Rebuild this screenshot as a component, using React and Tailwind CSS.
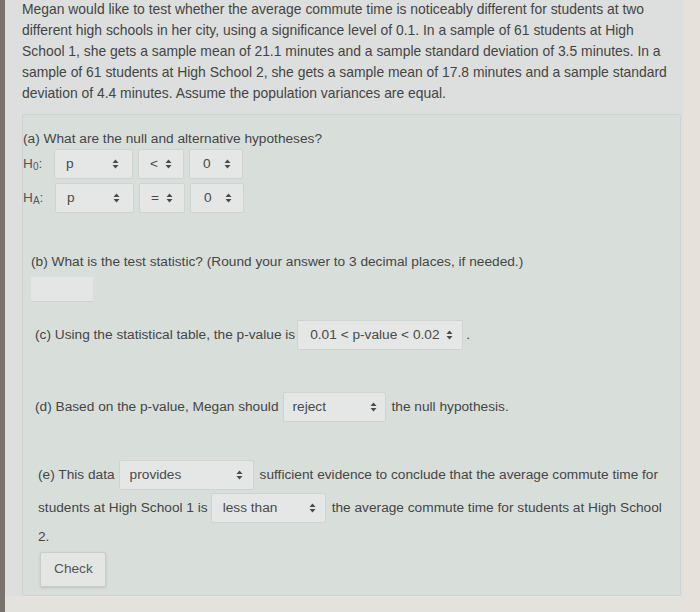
import React from "react";

const Arrows = () => (
  <svg width="7" height="10" viewBox="0 0 7 10" className="shrink-0">
    <path d="M3.5 0.5 L6.5 4 L0.5 4 Z" fill="#4a4a4a" />
    <path d="M3.5 9.5 L6.5 6 L0.5 6 Z" fill="#4a4a4a" />
  </svg>
);

const Select = ({ value, width, pl = "pl-[10px]", pr = "pr-[10px]", h = "h-[30px]" }) => (
  <div
    className={`flex items-center justify-between ${h} ${pl} ${pr} bg-[#e4e7e5] border border-[#cfd4d1] rounded-[2px] shrink-0`}
    style={{ width }}
  >
    <span className="text-[#4a4a4a]">{value}</span>
    <Arrows />
  </div>
);

export default function App() {
  return (
    <div
      className="w-[700px] h-[612px] flex overflow-hidden text-[13.7px] text-[#454545]"
      style={{ fontFamily: '"Liberation Sans", Arial, sans-serif' }}
    >
      <div className="w-[5px] bg-[#7a726d]" />
      <div className="flex-1 flex flex-col bg-[#dcdfdd]">
        <p className="pl-[17px] pr-[4px] text-[13.9px] leading-[21px] -mt-[1px] text-[#444] whitespace-nowrap">
          Megan would like to test whether the average commute time is noticeably different for students at two
          <br />
          different high schools in her city, using a significance level of 0.1. In a sample of 61 students at High
          <br />
          School 1, she gets a sample mean of 21.1 minutes and a sample standard deviation of 3.5 minutes. In a
          <br />
          sample of 61 students at High School 2, she gets a sample mean of 17.8 minutes and a sample standard
          <br />
          deviation of 4.4 minutes. Assume the population variances are equal.
        </p>

        <div className="mt-[10px] ml-[17px] mr-[2px] bg-[#d8dfdb] border border-[#cdd3d0] rounded-[2px] flex flex-col pb-[8px]">
          <div className="mt-[15px] h-[18px] leading-[18px]">(a) What are the null and alternative hypotheses?</div>

          <div className="mt-[1px] flex items-center gap-[5px]">
            <span className="w-[26px] text-[#555]">
              H<sub className="text-[10px]">0</sub>:
            </span>
            <Select value="p" width={79} pl="pl-[11px]" pr="pr-[13px]" />
            <Select value="<" width={46} pl="pl-[11px]" pr="pr-[11px]" />
            <Select value="0" width={54} pl="pl-[13px]" pr="pr-[11px]" />
          </div>
          <div className="mt-[4px] flex items-center gap-[5px]">
            <span className="w-[27px] text-[#555]">
              H<sub className="text-[10px]">A</sub>:
            </span>
            <Select value="p" width={79} pl="pl-[11px]" pr="pr-[13px]" />
            <Select value="=" width={46} pl="pl-[11px]" pr="pr-[11px]" />
            <Select value="0" width={54} pl="pl-[13px]" pr="pr-[11px]" />
          </div>

          <div className="mt-[40px] ml-[8px] h-[18px] leading-[18px]">
            (b) What is the test statistic? (Round your answer to 3 decimal places, if needed.)
          </div>
          <div className="mt-[6px] ml-[8px] w-[62px] h-[25px] bg-[#e3e6e4] border-b border-[#cfd3d0]" />

          <div className="mt-[18px] ml-[12px] flex items-center">
            <span>(c) Using the statistical table, the p-value is</span>
            <div className="ml-[2px]">
              <Select value="0.01 < p-value < 0.02" width={166} pl="pl-[12px]" pr="pr-[9px]" />
            </div>
            <span className="ml-[3px]">.</span>
          </div>

          <div className="mt-[42px] ml-[12px] flex items-center">
            <span>(d) Based on the p-value, Megan should</span>
            <div className="ml-[4px]">
              <Select value="reject" width={103} pl="pl-[9px]" pr="pr-[8px]" />
            </div>
            <span className="ml-[6px]">the null hypothesis.</span>
          </div>

          <div className="mt-[38px] ml-[15px] flex items-center">
            <span>(e) This data</span>
            <div className="ml-[4px]">
              <Select value="provides" width={135} pl="pl-[10px]" pr="pr-[10px]" />
            </div>
            <span className="ml-[6px]">sufficient evidence to conclude that the average commute time for</span>
          </div>
          <div className="mt-[3px] ml-[15px] flex items-center">
            <span>students at High School 1 is</span>
            <div className="ml-[3px]">
              <Select value="less than" width={115} pl="pl-[11px]" pr="pr-[9px]" />
            </div>
            <span className="ml-[6px]">the average commute time for students at High School</span>
          </div>
          <div className="mt-[5px] ml-[15px] h-[18px] leading-[18px]">2.</div>

          <button className="mt-[6px] ml-[17px] w-[66px] h-[35px] bg-[#e4e6e3] border border-[#c9cdca] rounded-[2px] shadow-sm text-[#555] text-left pl-[13px]">
            Check
          </button>
        </div>
        <div className="flex-1 bg-[#e4e2dd]" />
      </div>
      <div className="w-[17px] bg-[#e6e1db]" />
    </div>
  );
}
